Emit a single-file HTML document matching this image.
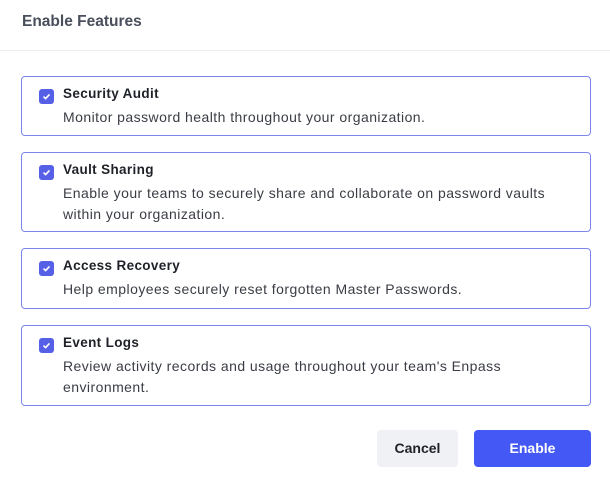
<!DOCTYPE html>
<html><head><style>
*{margin:0;padding:0;box-sizing:border-box}
body{width:610px;height:485px;background:#fff;font-family:"Liberation Sans",sans-serif;position:relative;overflow:hidden}
.h{position:absolute;left:22px;top:13px;font-size:15.5px;font-weight:bold;color:#4a4f5c}
.div{position:absolute;left:0;right:0;top:50px;border-top:1px solid #eceef1}
.card{position:absolute;left:21px;width:570px;border:1px solid #7b86ea;border-radius:4px}
.cb{position:absolute;left:17px;top:12px;width:15px;height:15px;background:#5660e6;border-radius:3px}
.cb svg{position:absolute;left:3px;top:3px}
.t{position:absolute;left:41px;top:9px;font-size:13.5px;font-weight:bold;color:#1f2128;letter-spacing:0.35px}
.d{position:absolute;left:41px;top:30px;font-size:14px;color:#3a3d45;line-height:21px;width:485px;letter-spacing:0.45px}
.btn{position:absolute;top:430px;height:37px;border-radius:4px;font-size:14px;font-weight:bold;text-align:center;line-height:37px}
</style></head><body>
<div class="h">Enable Features</div>
<div class="div"></div>
<div class="card" style="top:76px;height:60px"><div class="cb"><svg width="9" height="9" viewBox="0 0 9 9"><path d="M1.5 4.6 L3.6 6.6 L7.5 2.4" stroke="#fff" stroke-width="1.6" fill="none"/></svg></div><div class="t">Security Audit</div><div class="d">Monitor password health throughout your organization.</div></div>
<div class="card" style="top:152px;height:80px"><div class="cb"><svg width="9" height="9" viewBox="0 0 9 9"><path d="M1.5 4.6 L3.6 6.6 L7.5 2.4" stroke="#fff" stroke-width="1.6" fill="none"/></svg></div><div class="t">Vault Sharing</div><div class="d">Enable your teams to securely share and collaborate on password vaults within your organization.</div></div>
<div class="card" style="top:248px;height:61px"><div class="cb"><svg width="9" height="9" viewBox="0 0 9 9"><path d="M1.5 4.6 L3.6 6.6 L7.5 2.4" stroke="#fff" stroke-width="1.6" fill="none"/></svg></div><div class="t">Access Recovery</div><div class="d">Help employees securely reset forgotten Master Passwords.</div></div>
<div class="card" style="top:325px;height:81px"><div class="cb"><svg width="9" height="9" viewBox="0 0 9 9"><path d="M1.5 4.6 L3.6 6.6 L7.5 2.4" stroke="#fff" stroke-width="1.6" fill="none"/></svg></div><div class="t">Event Logs</div><div class="d">Review activity records and usage throughout your team's Enpass environment.</div></div>
<div class="btn" style="left:377px;width:81px;background:#f0f1f5;color:#1f2128">Cancel</div>
<div class="btn" style="left:474px;width:117px;background:#4458f5;color:#fff">Enable</div>
</body></html>
